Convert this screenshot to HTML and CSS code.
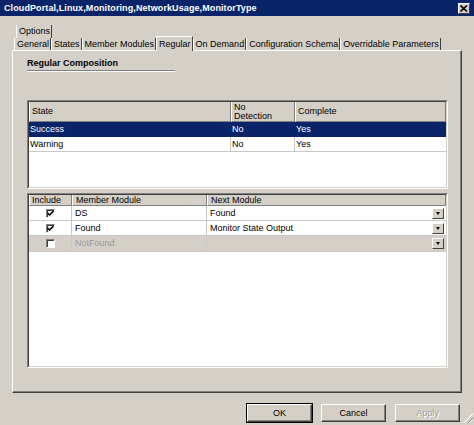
FILE: index.html
```html
<!DOCTYPE html>
<html lang="en">
<head>
    <meta charset="UTF-8">
    <title>CloudPortal,Linux,Monitoring,NetworkUsage,MonitorType</title>
    <link rel="stylesheet" href="styles.css">
</head>
<body>
    <div class="window">
        <div class="titlebar">
            <span class="title">CloudPortal,Linux,Monitoring,NetworkUsage,MonitorType</span>
            <span class="close-btn">
                <svg width="8" height="7" viewBox="0 0 8 7"><path d="M0.5 0.5 L7 6.5 M7 0.5 L0.5 6.5" stroke="#000" stroke-width="1.6"/></svg>
            </span>
        </div>

        <div class="client">
            <!-- tabs -->
            <div class="tabrow tabrow-back">
                <span class="tab">Options</span>
            </div>
            <div class="tabrow tabrow-front">
                <span class="tab">General</span>
                <span class="tab">States</span>
                <span class="tab">Member Modules</span>
                <span class="tab active">Regular</span>
                <span class="tab">On Demand</span>
                <span class="tab">Configuration Schema</span>
                <span class="tab">Overridable Parameters</span>
            </div>

            <div class="panel">
                <div class="group-title">Regular Composition</div>

                <div class="list list-states">
                    <div class="list-inner">
                        <div class="row head">
                            <div class="cell">State</div>
                            <div class="cell two-line">No<br>Detection</div>
                            <div class="cell">Complete</div>
                        </div>
                        <div class="row selected">
                            <div class="cell">Success</div>
                            <div class="cell">No</div>
                            <div class="cell">Yes</div>
                        </div>
                        <div class="row">
                            <div class="cell">Warning</div>
                            <div class="cell">No</div>
                            <div class="cell">Yes</div>
                        </div>
                    </div>
                </div>

                <div class="list list-modules">
                    <div class="list-inner">
                        <div class="row head">
                            <div class="cell">Include</div>
                            <div class="cell">Member Module</div>
                            <div class="cell">Next Module</div>
                        </div>
                        <div class="row">
                            <div class="cell check-cell">
                                <span class="checkbox checked"><svg width="7" height="7" viewBox="0 0 7 7"><path d="M0.5 3 L2.5 5 L6.5 1" fill="none" stroke="#000" stroke-width="1.5"/></svg></span>
                            </div>
                            <div class="cell">DS</div>
                            <div class="cell combo-cell">Found<span class="combo-btn"></span></div>
                        </div>
                        <div class="row">
                            <div class="cell check-cell">
                                <span class="checkbox checked"><svg width="7" height="7" viewBox="0 0 7 7"><path d="M0.5 3 L2.5 5 L6.5 1" fill="none" stroke="#000" stroke-width="1.5"/></svg></span>
                            </div>
                            <div class="cell">Found</div>
                            <div class="cell combo-cell">Monitor State Output<span class="combo-btn"></span></div>
                        </div>
                        <div class="row disabled">
                            <div class="cell check-cell"><span class="checkbox"></span></div>
                            <div class="cell">NotFound</div>
                            <div class="cell combo-cell"><span class="combo-btn"></span></div>
                        </div>
                    </div>
                </div>
            </div>

            <div class="buttons">
                <button class="btn default">OK</button>
                <button class="btn">Cancel</button>
                <button class="btn" disabled>Apply</button>
            </div>
        </div>

        <div class="grip"></div>
    </div>
</body>
</html>
```

FILE: styles.css
```css
:root {
    --face: #d4d0c8;
    --shadow: #808080;
    --dark: #404040;
    --navy: #0a246a;
    --grid: #c8c8c8;
}

body {
    margin: 0;
    padding: 0;
    font-family: "Liberation Sans", Arial, sans-serif;
    font-size: 9px;
    color: #000;
    background: var(--face);
}

.window {
    position: relative;
    width: 474px;
    height: 425px;
    overflow: hidden;
    background: var(--face);
}

/* title bar */
.titlebar {
    height: 16px;
    background: var(--navy);
    display: flex;
    align-items: center;
    padding: 0 4px 0 4px;
}

.title {
    color: #fff;
    font-weight: bold;
    font-size: 9px;
    letter-spacing: 0.1px;
}

.close-btn {
    margin-left: auto;
    width: 10px;
    height: 9px;
    background: var(--face);
    border: 1px solid;
    border-color: #fff var(--dark) var(--dark) #fff;
    display: flex;
    align-items: center;
    justify-content: center;
}

/* tabs */
.client {
    padding: 9px 12px 0 12px;
}

.tabrow {
    display: flex;
    height: 12px;
    align-items: stretch;
}

.tabrow-back {
    padding-left: 4px;
    height: 13px;
}

.tabrow-front {
    padding-left: 2px;
}

.tab {
    padding: 1px 1px 0 2px;
    border-left: 1px solid #fff;
    border-right: 1px solid var(--dark);
    line-height: 11px;
    white-space: nowrap;
}

.tab.active {
    position: relative;
    z-index: 1;
    margin-top: -2px;
    margin-bottom: -1px;
    border-top: 1px solid #fff;
    background: var(--face);
    padding-top: 2px;
}

.panel {
    height: 334px;
    border: 1px solid;
    border-color: #fff var(--dark) var(--dark) #fff;
    box-shadow: inset -1px -1px 0 var(--shadow);
    padding: 7px 13px 0 14px;
}

.group-title {
    width: 148px;
    font-weight: bold;
    line-height: 11px;
    padding-bottom: 1px;
    border-bottom: 1px solid var(--shadow);
    box-shadow: 0 1px 0 #fff;
}

/* list views */
.list {
    border: 1px solid;
    border-color: var(--shadow) #fff #fff var(--shadow);
    background: #fff;
}

.list-inner {
    height: 100%;
    box-sizing: border-box;
    border: 1px solid;
    border-color: var(--dark) var(--face) var(--face) var(--dark);
}

.list-states {
    margin-top: 29px;
    height: 87px;
}

.list-modules {
    margin-top: 4px;
    height: 173px;
}

.row {
    display: grid;
    height: 15px;
    border-bottom: 1px solid var(--grid);
    box-sizing: border-box;
}

.list-states .row {
    grid-template-columns: 202px 64px 151px;
}

.list-modules .row {
    grid-template-columns: 43px 135px 239px;
}

.cell {
    padding-left: 1px;
    line-height: 14px;
    border-right: 1px solid var(--grid);
    white-space: nowrap;
    overflow: hidden;
}

.row .cell:last-child {
    border-right: none;
}

.row.head {
    background: var(--face);
    border-bottom: none;
}

.row.head .cell {
    border-left: 1px solid #fff;
    border-right: 1px solid var(--shadow);
    padding-left: 2px;
}

.list-states .row.head {
    height: 20px;
}

.list-states .row.head .cell {
    line-height: 19px;
    border-bottom: 1px solid var(--shadow);
}

.list-states .row.head .cell.two-line {
    line-height: 9px;
    padding-top: 1px;
}

.list-modules .row.head {
    height: 11px;
}

.list-modules .row.head .cell {
    line-height: 10px;
    border-bottom: 1px solid var(--shadow);
}

.row.selected {
    background: var(--navy);
    color: #fff;
    border-bottom-color: var(--navy);
}

.row.selected .cell {
    border-right-color: var(--navy);
}

.row.disabled {
    background: var(--face);
    color: #9a9a9a;
    height: 16px;
}

.list-modules .row .cell:nth-child(2) {
    padding-left: 3px;
}

.list-modules .row .cell:nth-child(3) {
    padding-left: 3px;
}

.check-cell {
    display: flex;
    align-items: center;
    justify-content: center;
    padding-left: 0;
}

.checkbox {
    width: 7px;
    height: 7px;
    border: 1px solid;
    border-color: var(--shadow) #fff #fff var(--shadow);
    box-shadow: inset 1px 1px 0 var(--dark);
    background: #fff;
    display: flex;
    align-items: center;
    justify-content: center;
    overflow: hidden;
}

.checkbox.checked {
    background: #eee;
}

.combo-cell {
    display: flex;
    align-items: center;
}

.combo-btn {
    margin-left: auto;
    margin-right: 2px;
    width: 10px;
    height: 9px;
    background: var(--face);
    border: 1px solid;
    border-color: #fff var(--dark) var(--dark) #fff;
    position: relative;
}

.combo-btn::after {
    content: "";
    position: absolute;
    left: 3px;
    top: 3px;
    border-left: 2px solid transparent;
    border-right: 2px solid transparent;
    border-top: 3px solid #000;
}

/* buttons */
.buttons {
    display: flex;
    justify-content: flex-end;
    gap: 9px;
    padding: 11px 2px 0 0;
}

.btn {
    width: 65px;
    height: 18px;
    font-family: "Liberation Sans", Arial, sans-serif;
    font-size: 9px;
    color: #000;
    background: var(--face);
    border: 1px solid;
    border-color: #fff var(--dark) var(--dark) #fff;
    box-shadow: inset -1px -1px 0 var(--shadow);
    padding: 0;
}

.btn.default {
    outline: 1px solid #000;
    outline-offset: 0;
}

.btn:disabled {
    color: #a0a0a0;
    text-shadow: 1px 1px 0 #fff;
}

.grip {
    position: absolute;
    right: 1px;
    bottom: 2px;
    width: 10px;
    height: 10px;
    background: repeating-linear-gradient(135deg, transparent 0 2px, var(--shadow) 2px 3px, #fff 3px 4px);
    clip-path: polygon(100% 0, 100% 100%, 0 100%);
}
```
